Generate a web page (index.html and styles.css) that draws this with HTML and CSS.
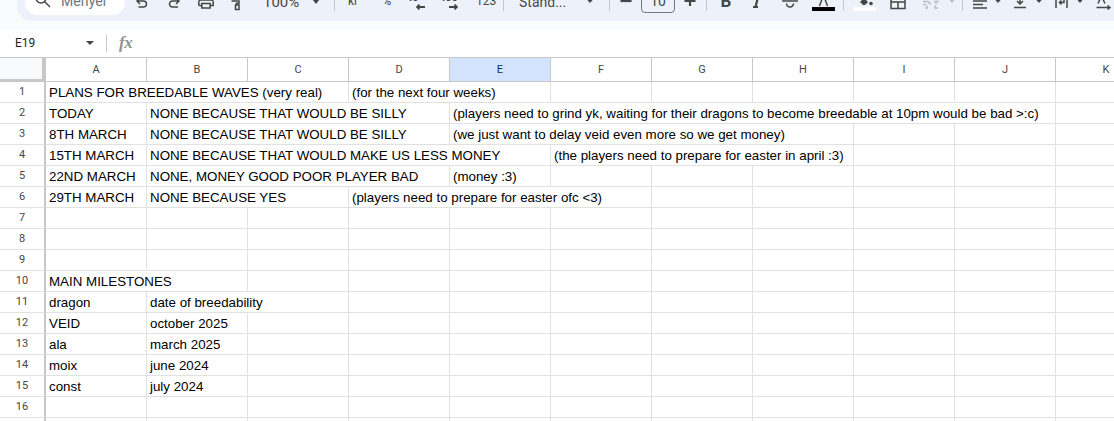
FILE: index.html
```html
<!DOCTYPE html>
<html lang="en">
<head>
<meta charset="utf-8">
<title>Plans for breedable waves</title>
<link rel="stylesheet" href="styles.css">
</head>
<body>
<header class="chrome">
  <div class="toolbar">
    <div class="search">
      <svg class="glyph" viewBox="0 -7 18 18"><circle cx="7" cy="-1" r="5" class="line"/><path d="M10.500 2.500 16 8" class="line"/></svg>
      <span class="search-label">Menyer</span>
    </div>
    <svg class="glyph ml8" viewBox="0 -7 18 18"><path class="line" d="M7 -2 4 1l3 3M4 1h6.500a3 3 0 0 1 0 6H5.500"/></svg>
    <svg class="glyph ml14" viewBox="0 -7 18 18"><path class="line" d="M11 -2l3 3-3 3M14 1H7.500a3 3 0 0 0 0 6H13"/></svg>
    <svg class="glyph ml14" viewBox="0 -7 18 18"><path class="line" d="M1.800 5.500V2a2 2 0 0 1 2-2h10.400a2 2 0 0 1 2 2v3.500h-3M1.800 5.500h3M4.800 3.500h8.400v4.500H4.800z"/></svg>
    <svg class="glyph ml15" viewBox="0 -7 18 18"><path class="line" d="M1.500 1H9V3.200H6.500V5"/><rect class="line" x="5.500" y="5" width="3.500" height="4.500"/></svg>
    <span class="txt zoom ml15">100%</span>
    <svg class="caret ml12" viewBox="0 -7 8 18"><path d="M.5-.5h7L4 4z"/></svg>
    <i class="sep ml14"></i>
    <span class="txt small w10 ml13">kr</span>
    <span class="txt small w10 ml24">%</span>
    <span class="dec ml15"><span class="dec-label">.0</span><svg class="arrow" viewBox="0 0 9 6"><path class="bold-thin" d="M9 3H1M3.500.6 1 3l2.500 2.400"/></svg></span>
    <span class="dec ml15"><span class="dec-label">.00</span><svg class="arrow" viewBox="0 0 9 6"><path class="bold-thin" d="M0 3h8M5.500.6 8 3 5.500 5.400"/></svg></span>
    <span class="txt small w16 ml18">123</span>
    <i class="sep ml11"></i>
    <span class="txt font ml15">Stand...</span>
    <svg class="caret ml18" viewBox="0 -7 8 18"><path d="M.5-1h7L4 3z"/></svg>
    <i class="sep ml15"></i>
    <svg class="glyph ml7" viewBox="0 -7 18 18"><path class="bold" d="M3.500 1h11"/></svg>
    <span class="size ml6">10</span>
    <svg class="glyph ml6" viewBox="0 -7 18 18"><path class="bold" d="M3.500 1h11M9-4v10"/></svg>
    <i class="sep ml7"></i>
    <span class="txt style-b ml10">B</span>
    <svg class="glyph ml13" viewBox="0 -7 18 18"><path class="bold" d="M10.500-5 7.500 7M5 7h5"/></svg>
    <svg class="glyph ml15" viewBox="0 -7 18 18"><path class="line" d="M1 1h16M5.500 3.500a3.500 3.500 0 0 0 7 0"/></svg>
    <svg class="swatch ml13" viewBox="0 -7 23 18"><path class="line" d="M7.500 6 11.500-5 15.500 6"/><rect class="fill-black" x="0" y="7" width="23" height="4"/></svg>
    <i class="sep ml8"></i>
    <svg class="swatch ml9" viewBox="0 -7 23 18"><path class="ink" d="M7 2 11-2l4 4-3 3H10z"/><circle class="ink" cx="18" cy="3.500" r="1.800"/><rect class="fill-white" x="0" y="7" width="23" height="4"/></svg>
    <svg class="glyph ml13" viewBox="0 -7 18 18"><path class="line" d="M2-6h14V8.500H2zM2 2h14M9 2v6.500"/></svg>
    <svg class="glyph ml15" viewBox="0 -7 18 18"><path class="muted" d="M1 1.500h5l3 3M1 4.500h3M17 1.500h-5M14 1.500v3M5 5.500V8M3 8h3M13 5.500V8h3"/></svg>
    <svg class="caret muted-fill ml8" viewBox="0 -7 8 18"><path d="M.5-1.500h7L4 3z"/></svg>
    <i class="sep ml6"></i>
    <svg class="glyph ml8" viewBox="0 -7 18 18"><path class="line" d="M2 1h14M2 4.500h10M2 8h14"/></svg>
    <svg class="caret ml5" viewBox="0 -7 8 18"><path d="M.5-1h7L4 3z"/></svg>
    <svg class="glyph ml10" viewBox="0 -7 18 18"><path class="line" d="M8-4V3.500M5 1l3 3 3-3M2 7.500h12"/></svg>
    <svg class="caret ml5" viewBox="0 -7 8 18"><path d="M.5-1h7L4 3z"/></svg>
    <svg class="glyph ml10" viewBox="0 -7 18 18"><path class="line" d="M3-4V8M14-4V8M11-2v4.500H6.500M8.500.5l-2 2 2 2"/></svg>
    <svg class="caret ml5" viewBox="0 -7 8 18"><path d="M.5-1h7L4 3z"/></svg>
    <svg class="glyph ml11" viewBox="0 -7 18 18"><path class="line" d="M3 3.500 6.500-4 10 3.500M1.500 7.500h13M12.500 5.500l2.500 2-2.500 2"/></svg>
  </div>
</header>
<section class="formula">
  <span class="name">E19</span>
  <svg class="name-caret" viewBox="0 0 8 4"><path d="M0 0h8L4 4z"/></svg>
  <i class="formula-sep"></i>
  <span class="fx">fx</span>
</section>
<main class="sheet">
  <div class="corner"></div>
  <div class="col">A</div><div class="col">B</div><div class="col">C</div><div class="col">D</div><div class="col active">E</div><div class="col">F</div><div class="col">G</div><div class="col">H</div><div class="col">I</div><div class="col">J</div><div class="col">K</div>

  <div class="row">1</div><div class="cell s3">PLANS FOR BREEDABLE WAVES (very real)</div><div class="cell s2">(for the next four weeks)</div><div class="cell"></div><div class="cell"></div><div class="cell"></div><div class="cell"></div><div class="cell"></div><div class="cell"></div>
  <div class="row">2</div><div class="cell">TODAY</div><div class="cell s3">NONE BECAUSE THAT WOULD BE SILLY</div><div class="cell s6">(players need to grind yk, waiting for their dragons to become breedable at 10pm would be bad &gt;:c)</div><div class="cell"></div>
  <div class="row">3</div><div class="cell">8TH MARCH</div><div class="cell s3">NONE BECAUSE THAT WOULD BE SILLY</div><div class="cell s4">(we just want to delay veid even more so we get money)</div><div class="cell"></div><div class="cell"></div><div class="cell"></div>
  <div class="row">4</div><div class="cell">15TH MARCH</div><div class="cell s4">NONE BECAUSE THAT WOULD MAKE US LESS MONEY</div><div class="cell s3">(the players need to prepare for easter in april :3)</div><div class="cell"></div><div class="cell"></div><div class="cell"></div>
  <div class="row">5</div><div class="cell">22ND MARCH</div><div class="cell s3">NONE, MONEY GOOD POOR PLAYER BAD</div><div class="cell">(money :3)</div><div class="cell"></div><div class="cell"></div><div class="cell"></div><div class="cell"></div><div class="cell"></div><div class="cell"></div>
  <div class="row">6</div><div class="cell">29TH MARCH</div><div class="cell s2">NONE BECAUSE YES</div><div class="cell s3">(players need to prepare for easter ofc &lt;3)</div><div class="cell"></div><div class="cell"></div><div class="cell"></div><div class="cell"></div><div class="cell"></div>
  <div class="row">7</div><div class="cell"></div><div class="cell"></div><div class="cell"></div><div class="cell"></div><div class="cell"></div><div class="cell"></div><div class="cell"></div><div class="cell"></div><div class="cell"></div><div class="cell"></div><div class="cell"></div>
  <div class="row">8</div><div class="cell"></div><div class="cell"></div><div class="cell"></div><div class="cell"></div><div class="cell"></div><div class="cell"></div><div class="cell"></div><div class="cell"></div><div class="cell"></div><div class="cell"></div><div class="cell"></div>
  <div class="row">9</div><div class="cell"></div><div class="cell"></div><div class="cell"></div><div class="cell"></div><div class="cell"></div><div class="cell"></div><div class="cell"></div><div class="cell"></div><div class="cell"></div><div class="cell"></div><div class="cell"></div>
  <div class="row">10</div><div class="cell s2">MAIN MILESTONES</div><div class="cell"></div><div class="cell"></div><div class="cell"></div><div class="cell"></div><div class="cell"></div><div class="cell"></div><div class="cell"></div><div class="cell"></div><div class="cell"></div>
  <div class="row">11</div><div class="cell">dragon</div><div class="cell s2">date of breedability</div><div class="cell"></div><div class="cell"></div><div class="cell"></div><div class="cell"></div><div class="cell"></div><div class="cell"></div><div class="cell"></div><div class="cell"></div>
  <div class="row">12</div><div class="cell">VEID</div><div class="cell">october 2025</div><div class="cell"></div><div class="cell"></div><div class="cell"></div><div class="cell"></div><div class="cell"></div><div class="cell"></div><div class="cell"></div><div class="cell"></div><div class="cell"></div>
  <div class="row">13</div><div class="cell">ala</div><div class="cell">march 2025</div><div class="cell"></div><div class="cell"></div><div class="cell"></div><div class="cell"></div><div class="cell"></div><div class="cell"></div><div class="cell"></div><div class="cell"></div><div class="cell"></div>
  <div class="row">14</div><div class="cell">moix</div><div class="cell">june 2024</div><div class="cell"></div><div class="cell"></div><div class="cell"></div><div class="cell"></div><div class="cell"></div><div class="cell"></div><div class="cell"></div><div class="cell"></div><div class="cell"></div>
  <div class="row">15</div><div class="cell">const</div><div class="cell">july 2024</div><div class="cell"></div><div class="cell"></div><div class="cell"></div><div class="cell"></div><div class="cell"></div><div class="cell"></div><div class="cell"></div><div class="cell"></div><div class="cell"></div>
  <div class="row">16</div><div class="cell"></div><div class="cell"></div><div class="cell"></div><div class="cell"></div><div class="cell"></div><div class="cell"></div><div class="cell"></div><div class="cell"></div><div class="cell"></div><div class="cell"></div><div class="cell"></div>
  <div class="row"></div><div class="cell"></div><div class="cell"></div><div class="cell"></div><div class="cell"></div><div class="cell"></div><div class="cell"></div><div class="cell"></div><div class="cell"></div><div class="cell"></div><div class="cell"></div><div class="cell"></div>
</main>
</body>
</html>
```
FILE: styles.css
```css
* { box-sizing: border-box; }
html, body { margin: 0; height: 421px; overflow: hidden; background: #fff; }
body { width: 1114px; font-family: "Liberation Sans", Arial, sans-serif; color: #000; }

.chrome { height: 29px; background: #f9fbfd; padding: 0 0 8px 17px; }
.toolbar {
  height: 21px;
  background: #edf2fa;
  border-bottom-left-radius: 14px;
  padding-left: 8px;
  display: flex;
  align-items: flex-end;
  overflow: hidden;
  color: #444746;
  font-family: Roboto, "Liberation Sans", sans-serif;
}
.search {
  flex: none;
  width: 100px;
  height: 15px;
  margin-bottom: 6px;
  background: #fff;
  border-radius: 0 0 13px 13px;
  display: flex;
  align-items: flex-end;
  padding-left: 9px;
  overflow: hidden;
}
.search .glyph { margin-bottom: 5px; }
.search-label { font-size: 14px; line-height: 20px; height: 20px; margin: 0 0 5px 9px; color: #70757a; flex: none; transform: translateY(1px); letter-spacing: .1px; }

.glyph { flex: none; width: 18px; height: 18px; margin-bottom: 10px; overflow: visible; }
.swatch { flex: none; width: 23px; height: 18px; margin-bottom: 10px; overflow: visible; }
.caret { flex: none; width: 8px; height: 18px; margin-bottom: 10px; fill: #444746; }
.muted-fill { fill: #b9bdc4; }
.line { fill: none; stroke: #444746; stroke-width: 1.5; }
.bold { fill: none; stroke: #444746; stroke-width: 2.2; }
.bold-thin { fill: none; stroke: #444746; stroke-width: 1.8; }
.muted { fill: none; stroke: #b9bdc4; stroke-width: 1.5; }
.ink { fill: #444746; }
.fill-black { fill: #000; }
.fill-white { fill: #fff; }
.sep { flex: none; width: 1px; height: 12px; margin-bottom: 10px; background: #c7c7c7; }

.txt { flex: none; height: 20px; line-height: 20px; white-space: nowrap; }
.zoom { width: 37px; font-size: 15px; margin-bottom: 9px; }
.small { font-size: 12px; margin-bottom: 10px; text-align: center; }
.font { width: 49px; font-size: 14px; margin-bottom: 9px; }
.style-b { width: 18px; font-size: 17px; font-weight: 700; text-align: center; margin-bottom: 10px; }
.w10 { width: 10px; }
.w16 { width: 16px; }

.dec { flex: none; width: 18px; height: 20px; margin-bottom: 11px; padding-left: 2px; position: relative; font-size: 11px; font-weight: 700; }
.dec-label { display: block; line-height: 16px; white-space: nowrap; }
.arrow { position: absolute; right: 0; bottom: 0; width: 9px; height: 6px; }

.size {
  flex: none;
  width: 34px;
  height: 24px;
  margin-bottom: 8px;
  border: 1px solid #747775;
  border-radius: 4px;
  font-size: 14px;
  line-height: 23px;
  text-align: center;
}

.ml5 { margin-left: 5px; } .ml6 { margin-left: 6px; } .ml7 { margin-left: 7px; }
.ml8 { margin-left: 8px; } .ml9 { margin-left: 9px; } .ml10 { margin-left: 10px; }
.ml11 { margin-left: 11px; } .ml12 { margin-left: 12px; } .ml13 { margin-left: 13px; }
.ml14 { margin-left: 14px; } .ml15 { margin-left: 15px; } .ml18 { margin-left: 18px; }
.ml24 { margin-left: 24px; }

.formula { height: 28px; background: #fff; display: flex; align-items: center; padding-left: 15px; }
.name { width: 71px; font: 12px/16px Roboto, "Liberation Sans", sans-serif; color: #1f1f1f; }
.name-caret { width: 8px; height: 4px; fill: #444746; }
.formula-sep { width: 1px; height: 17px; background: #c7c7c7; margin-left: 12px; }
.fx { margin-left: 12px; font: italic 700 17px/20px "Liberation Serif", serif; color: #909396; letter-spacing: -.5px; }

.sheet {
  display: grid;
  grid-template-columns: 46px repeat(11, 101px);
  grid-template-rows: 25px;
  grid-auto-rows: 21px;
  font-size: 13.33px;
}
.corner {
  background: #f8f9fa;
  border-top: 1px solid #c7c7c7;
  border-right: 4px solid #c7c7c7;
  border-bottom: 3px solid #c7c7c7;
}
.col {
  border-top: 1px solid #c7c7c7;
  border-bottom: 1px solid #c7c7c7;
  border-right: 1px solid #c7c7c7;
  background: #fff;
  font: 11px/23px Roboto, "Liberation Sans", sans-serif;
  color: #444746;
  text-align: center;
}
.active { background: #d3e3fd; color: #0b2f66; }
.row {
  border-right: 2px solid #c7c7c7;
  border-bottom: 1px solid #e1e1e1;
  font: 11px/19px Roboto, "Liberation Sans", sans-serif;
  color: #444746;
  text-align: center;
}
.cell {
  border-right: 1px solid #e1e1e1;
  border-bottom: 1px solid #e1e1e1;
  padding: 1px 0 0 3px;
  line-height: 20px;
  white-space: nowrap;
  overflow: hidden;
}
.s2 { grid-column: span 2; }
.s3 { grid-column: span 3; }
.s4 { grid-column: span 4; }
.s6 { grid-column: span 6; }
```
